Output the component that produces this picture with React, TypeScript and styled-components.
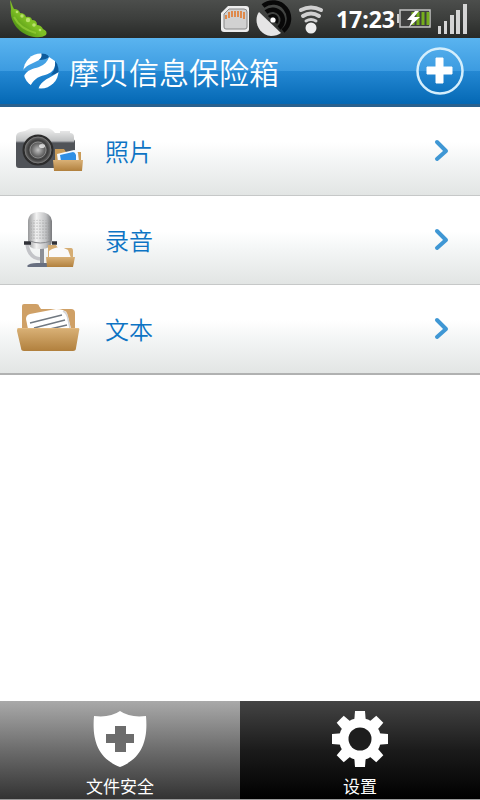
import React from "react";
import styled, { createGlobalStyle } from "styled-components";

const GlobalStyle = createGlobalStyle`
  * { box-sizing: border-box; }
  body {
    margin: 0;
    background: #fff;
    font-family: "Noto Sans CJK SC", sans-serif;
  }
  svg { display: block; flex: none; }
`;

const Page = styled.div`
  min-height: 100vh;
  display: flex;
  flex-direction: column;
`;

const StatusBar = styled.div`
  height: 38px;
  padding: 0 12px 0 8px;
  display: flex;
  align-items: center;
  justify-content: space-between;
  background: linear-gradient(#4c4e4c, #3c3e3c 50%, #282a28);
`;

const StatusGroup = styled.div`
  display: flex;
  align-items: center;
`;

const Clock = styled.time`
  margin: 0 2px 0 12px;
  color: #fff;
  font: bold 23px/38px "Noto Sans", "Open Sans", sans-serif;
`;

const Header = styled.header`
  height: 69px;
  padding: 0 14px 0 20px;
  display: flex;
  align-items: center;
  border-bottom: 3px solid #2a618e;
  background: linear-gradient(#5ab4f0, #3c9be0 50%, #2488d3 50%, #0468b4);
`;

const Title = styled.h1`
  flex: 1;
  margin: 0 0 0 7px;
  color: #fff;
  font-size: 30px;
  font-weight: 350;
  line-height: 44px;
`;

const AddButton = styled.button`
  padding: 0;
  border: 0;
  background: none;
`;

const List = styled.ul`
  flex: 1;
  margin: 0;
  padding: 0;
  list-style: none;
`;

const Item = styled.li`
  border-bottom: 1px solid #c6c8c8;
  background: linear-gradient(#fff 40%, #f4f6f6 60%, #e2e5e4);
  &:last-child {
    border-bottom: 2px solid #b0b1b1;
  }
`;

const ItemButton = styled.button`
  width: 100%;
  height: 88px;
  padding: 0 30px 0 14px;
  display: flex;
  align-items: center;
  border: 0;
  background: none;
  font-family: inherit;
`;

const ItemLabel = styled.span`
  flex: 1;
  margin-left: 19px;
  color: #0d74c4;
  font-size: 24px;
  font-weight: 350;
  line-height: 32px;
  text-align: left;
`;

const TabBar = styled.nav`
  display: grid;
  grid-template-columns: 1fr 1fr;
`;

const Tab = styled.button<{ $active?: boolean }>`
  height: 99px;
  padding: 8px 0 0;
  display: flex;
  flex-direction: column;
  align-items: center;
  border: 0;
  border-bottom: 1px solid #999;
  color: #fff;
  font-family: inherit;
  font-size: 17px;
  line-height: 24px;
  background: ${(p) =>
    p.$active
      ? "linear-gradient(#a9a9a9, #6c6c6c 50%, #333)"
      : "linear-gradient(#444, #1b1b1b 50%, #000)"};
`;

const TabIcon = styled.svg`
  margin-bottom: 5px;
`;

const PeaPod = () => (
  <svg width="42" height="38" viewBox="8 0 42 38" aria-hidden="true">
    <defs>
      <linearGradient id="pod" x1="0" y1="1" x2="0.6" y2="0.3">
        <stop offset="0.15" stopColor="#3d8010" />
        <stop offset="0.7" stopColor="#7fc024" />
      </linearGradient>
    </defs>
    <path d="M10 0C12 3 12 6 14 9Q19 9 20 13Q25 13 26 17Q31 16 32 20Q37 20 37 25Q41 25 43 29Q48 31 46 35Q42 38 34 37C20 35 9 22 11 9Z" fill="url(#pod)" />
    <path d="M14 17Q20 29 36 33" fill="none" stroke="#96d038" strokeWidth="2" opacity="0.7" />
    <g fill="#b9e26c">
      <circle cx="17" cy="12" r="1.3" />
      <circle cx="22" cy="16" r="1.7" />
      <circle cx="28" cy="20" r="2.2" />
      <circle cx="34" cy="25" r="1.8" />
      <circle cx="40" cy="30" r="1.3" />
    </g>
  </svg>
);

const SdCard = () => (
  <svg width="36" height="38" viewBox="220 0 36 38" aria-hidden="true">
    <path d="M228 6H246Q249 6 249 9V29Q249 32 246 32H224Q221 32 221 29V13Z" fill="#ededed" />
    <path d="M229 9H244Q247 9 247 12V27Q247 29 245 29H226Q224 29 224 27V14Z" fill="#d1d1d1" stroke="#888" />
    <path d="M226 15V19M229 12V18M232 11V17M235 11V17M238 11V17M241 11V18M244 12V19" stroke="#df8a4c" strokeWidth="2" />
  </svg>
);

const Dish = () => (
  <svg width="40" height="38" viewBox="256 0 40 38" aria-hidden="true">
    <g fill="none" stroke="#080808" strokeWidth="4.5">
      <path d="M263 6A16 16 0 0 1 283 31" />
      <path d="M266 12A10 10 0 1 1 279 28" />
      <path d="M269 17A4 4 0 1 1 276 23" strokeWidth="3" />
    </g>
    <path d="M259 12C253 20 258 35 271 36Q277 36 281 33Z" fill="#e5e5e5" />
    <circle cx="273" cy="20" r="2.6" fill="#fff" />
  </svg>
);

const Wifi = () => (
  <svg width="28" height="38" viewBox="296 0 28 38" aria-hidden="true">
    <g fill="none" stroke="#d0d0d0" strokeWidth="4" strokeLinecap="round">
      <path d="M301 10Q311 5 321 10" />
      <path d="M303 16Q311 11 319 16" />
      <path d="M306 21Q311 18 316 21" strokeWidth="3" />
    </g>
    <circle cx="311" cy="28" r="5.5" fill="#ededed" />
  </svg>
);

const Battery = () => (
  <svg width="36" height="38" viewBox="397 0 36 38" aria-hidden="true">
    <path d="M400 10H430V27H400Z" fill="#3f403f" stroke="#c4c4c4" strokeWidth="1.5" />
    <path d="M398 14V23" stroke="#d0d0d0" strokeWidth="2" />
    <path d="M413 12V25M418 12V25M423 12V25M428 12V25" stroke="#75ad1c" strokeWidth="3" />
    <path d="M415 11L407 20H412L409 27L420 17H414L419 11Z" fill="#fff" />
  </svg>
);

const Signal = () => (
  <svg width="35" height="38" viewBox="433 0 35 38" fill="#d5d5d5" aria-hidden="true">
    <path d="M438 26h3v8h-3zM444 21h3v13h-3zM450 15h4v19h-4zM456 10h4v24h-4zM463 4h4v30h-4z" />
  </svg>
);

const Logo = () => (
  <svg width="42" height="42" viewBox="20 51 42 42" aria-hidden="true">
    <defs>
      <clipPath id="globe"><circle cx="41" cy="72" r="17.5" /></clipPath>
    </defs>
    <g clipPath="url(#globe)">
      <path d="M22 52H41Q44 57 39 61C34 64 28 65 23 71Z" fill="#fff" />
      <path d="M23 79C27 70 33 70 39 68Q47 65 49 58L55 62C56 70 52 74 45 76C37 78 33 81 30 88L22 86Z" fill="#fff" />
      <path d="M38 91C41 80 50 80 60 72V91Z" fill="#fff" />
      <path d="M41 54Q47 54 49 58Q46 61 39 61Q43 58 41 54Z" fill="#0d5a9c" />
      <path d="M55 62L60 67V72Q56 75 51 76Q56 70 55 62Z" fill="#0d5a9c" />
    </g>
  </svg>
);

const AddIcon = () => (
  <svg width="52" height="52" viewBox="414 46 52 52" aria-hidden="true">
    <circle cx="440" cy="72" r="22.5" fill="none" stroke="#d4eefc" strokeWidth="2.5" />
    <path d="M436 59H443V68H452V75H443V84H436V75H427V68H436Z" fill="#fff" stroke="#fff" strokeLinejoin="round" />
  </svg>
);

const Gradients = () => (
  <defs>
    <linearGradient id="tan" x2="0" y2="1">
      <stop stopColor="#d9b177" />
      <stop offset="1" stopColor="#b1803d" />
    </linearGradient>
    <linearGradient id="metal">
      <stop stopColor="#969799" />
      <stop offset="0.35" stopColor="#f3f3f3" />
      <stop offset="0.75" stopColor="#bfc0c2" />
      <stop offset="1" stopColor="#77787b" />
    </linearGradient>
    <linearGradient id="silver" x2="0" y2="1">
      <stop stopColor="#f2f2f2" />
      <stop offset="1" stopColor="#babcbd" />
    </linearGradient>
    <radialGradient id="lens">
      <stop stopColor="#c4c4c4" />
      <stop offset="0.4" stopColor="#777" />
      <stop offset="0.75" stopColor="#3c3c3c" />
      <stop offset="1" stopColor="#696969" />
    </radialGradient>
    <pattern id="mesh" width="3" height="3" patternUnits="userSpaceOnUse">
      <circle cx="1" cy="1" r="0.6" fill="#8a8a8a" />
    </pattern>
  </defs>
);

const CameraIcon = () => (
  <svg width="72" height="60" viewBox="14 122 72 60" aria-hidden="true">
    <Gradients />
    <rect x="16" y="140" width="59" height="29" rx="3" fill="#505358" />
    <path d="M16 143V138Q16 134 20 133L25 132L31 129H47Q51 129 55 134H60V132H70V134Q74 134 74 138V143Z" fill="url(#silver)" />
    <path d="M16 143H74" stroke="#82858a" />
    <circle cx="38" cy="151" r="15.5" fill="#2c2c2c" />
    <circle cx="38" cy="151" r="13" fill="url(#lens)" stroke="#777" />
    <circle cx="38" cy="151" r="8" fill="none" stroke="#8a8a8a" />
    <ellipse cx="42" cy="147" rx="3" ry="2" fill="#fff" opacity="0.7" />
    <path d="M55 150H64L66 153H81V162H55Z" fill="#c99b58" />
    <path d="M57 155L74 151Q77 151 78 154L79 163H58Z" fill="#f5faff" />
    <path d="M60 156L73 153Q75 153 76 156V162H61Z" fill="#2f8fe5" />
    <path d="M53 161H83L82 172H54Z" fill="url(#tan)" />
  </svg>
);

const MicrophoneIcon = () => (
  <svg width="72" height="60" viewBox="14 210 72 60" aria-hidden="true">
    <path d="M27 244Q29 259 42 259" fill="none" stroke="#c3c4c8" strokeWidth="3.5" />
    <path d="M42 248V264" stroke="#8c8f96" strokeWidth="4" />
    <path d="M27 266Q29 263 37 263H49V267H28Z" fill="#686f80" />
    <path d="M28 222Q28 212 39 212Q51 212 52 221V240Q52 249 41 249H37Q28 249 28 240Z" fill="url(#metal)" />
    <path d="M31 221Q38 218 49 221V239H31Z" fill="url(#mesh)" />
    <path d="M24 243H31M52 243H57" stroke="#303238" strokeWidth="3.5" />
    <path d="M30 241Q40 245 51 241" fill="none" stroke="#88898d" />
    <path d="M48 245H56L58 248H71Q73 248 73 251V259H48Z" fill="#d5ad73" />
    <path d="M49 251Q59 244 68 250L71 258H49Z" fill="#fafafa" />
    <path d="M46 257H75L73 267H47Z" fill="url(#tan)" />
  </svg>
);

const FolderIcon = () => (
  <svg width="72" height="60" viewBox="14 299 72 60" aria-hidden="true">
    <path d="M22 306Q22 304 24 304H36Q39 304 39 306L41 309H71Q75 309 75 313V332H22Z" fill="#cfa066" />
    <path d="M26 319Q26 315 30 314L56 309Q64 309 67 313L71 329H28Z" fill="#fff" />
    <path d="M63 311Q67 313 68 319L70 328" fill="none" stroke="#d4d5d7" strokeWidth="1.5" />
    <path d="M30 323L62 315M34 328L65 320M50 329L67 325" stroke="#707880" strokeWidth="1.4" />
    <path d="M18 328H78Q80 328 79 331L76 348Q76 351 73 351H24Q21 351 21 348L17 331Q17 328 18 328Z" fill="url(#tan)" />
    <path d="M18 328.5H78" stroke="#e2b980" />
  </svg>
);

const Chevron = () => (
  <svg width="20" height="30" viewBox="0 0 20 30" fill="none" stroke="#3f97d4" strokeWidth="4" strokeLinecap="round" strokeLinejoin="round" aria-hidden="true">
    <path d="M7 6L16 15L7 23" />
  </svg>
);

const ShieldIcon = () => (
  <TabIcon width="60" height="60" viewBox="89 709 60 60" aria-hidden="true">
    <path d="M119 711Q129 718 145 716C147 739 142 758 119 767C96 758 91 739 93 716Q109 718 119 711Z" fill="#fff" />
    <path d="M114 726H125V734H133V743H125V752H114V743H105V734H114Z" fill="#6c6c6c" />
  </TabIcon>
);

const GearIcon = () => (
  <TabIcon width="60" height="60" viewBox="330 709 60 60" aria-hidden="true">
    <g fill="#fff">
      <circle cx="360" cy="739" r="21" />
      {[0, 45, 90, 135, 180, 225, 270, 315].map((angle) => (
        <path key={angle} d="M354 724L355 711H365L366 724Z" transform={`rotate(${angle} 360 739)`} />
      ))}
    </g>
    <circle cx="360" cy="739" r="11.5" fill="#1d1d1d" />
  </TabIcon>
);

const entries = [
  { label: "照片", Icon: CameraIcon },
  { label: "录音", Icon: MicrophoneIcon },
  { label: "文本", Icon: FolderIcon },
];

export default function App() {
  return (
    <Page>
      <GlobalStyle />
      <StatusBar>
        <PeaPod />
        <StatusGroup>
          <SdCard />
          <Dish />
          <Wifi />
          <Clock>17:23</Clock>
          <Battery />
          <Signal />
        </StatusGroup>
      </StatusBar>
      <Header>
        <Logo />
        <Title>摩贝信息保险箱</Title>
        <AddButton type="button" aria-label="添加">
          <AddIcon />
        </AddButton>
      </Header>
      <List>
        {entries.map(({ label, Icon }) => (
          <Item key={label}>
            <ItemButton type="button">
              <Icon />
              <ItemLabel>{label}</ItemLabel>
              <Chevron />
            </ItemButton>
          </Item>
        ))}
      </List>
      <TabBar>
        <Tab type="button" $active>
          <ShieldIcon />
          文件安全
        </Tab>
        <Tab type="button">
          <GearIcon />
          设置
        </Tab>
      </TabBar>
    </Page>
  );
}
